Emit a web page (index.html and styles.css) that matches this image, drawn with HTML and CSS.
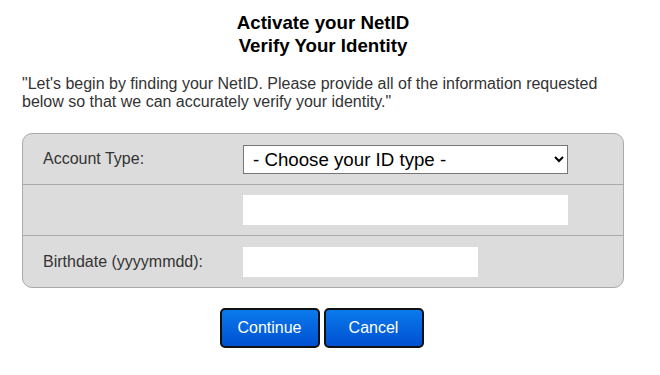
FILE: index.html
```html
<!DOCTYPE html>
<html lang="en">

<head>
    <meta charset="UTF-8">
    <meta name="viewport" content="width=device-width, initial-scale=1.0">
    <title>Activate your NetID</title>
    <link rel="stylesheet" href="styles.css">
</head>

<body>
    <div class="page">
        <h3 class="title">Activate your NetID<br>Verify Your Identity</h3>

        <p class="intro">"Let's begin by finding your NetID. Please provide all of the information requested below so that we can accurately verify your identity."</p>

        <form id="verifyForm">
            <div class="form-box">
                <div class="form-row">
                    <label for="idType">Account Type:</label>
                    <select id="idType">
                        <option>- Choose your ID type -</option>
                        <option>Student ID</option>
                        <option>Employee ID</option>
                    </select>
                </div>
                <div class="form-row">
                    <label for="idNumber"></label>
                    <input type="text" id="idNumber" class="wide">
                </div>
                <div class="form-row">
                    <label for="birthdate">Birthdate (yyyymmdd):</label>
                    <input type="text" id="birthdate" class="short">
                </div>
            </div>

            <div class="actions">
                <button type="submit" class="btn">Continue</button>
                <button type="button" class="btn">Cancel</button>
            </div>
        </form>
    </div>
</body>

</html>
```

FILE: styles.css
```css
body {
    margin: 0;
    font-family: "Liberation Sans", Arial, sans-serif;
    font-size: 16px;
    color: #333;
    background-color: #fff;
}

.page {
    width: 602px;
    margin-left: 22px;
}

.title {
    margin: 12px 0 0;
    font-size: 18.72px;
    line-height: 22.5px;
    font-weight: bold;
    color: #000;
    text-align: center;
}

.intro {
    margin: 18px 0 22px;
    line-height: 18px;
}

.form-box {
    background-color: #dcdcdc;
    border: 1px solid #aaa;
    border-radius: 10px;
}

.form-row {
    display: flex;
    align-items: center;
    height: 50px;
    border-bottom: 1px solid #aaa;
}

.form-row:last-child {
    height: 51px;
    border-bottom: none;
}

.form-row label {
    width: 200px;
    padding-left: 20px;
    flex-shrink: 0;
}

select {
    width: 325px;
    height: 29px;
    margin: 0;
    padding: 0 5px;
    font-family: "Liberation Sans", Arial, sans-serif;
    font-size: 18.7px;
    color: #000;
    background-color: #fff;
    border: 1px solid #767676;
    border-radius: 0;
}

input[type="text"] {
    height: 30px;
    margin: 0;
    padding: 0 4px;
    box-sizing: border-box;
    border: none;
    background-color: #fff;
    font-size: 16px;
}

.wide {
    width: 325px;
}

.short {
    width: 235px;
}

.actions {
    display: flex;
    justify-content: center;
    gap: 4px;
    margin-top: 20px;
    padding-right: 3px;
}

.btn {
    width: 100px;
    height: 40px;
    font-family: "Liberation Sans", Arial, sans-serif;
    font-size: 16px;
    color: #fff;
    background: linear-gradient(#0a7aec, #0050d2);
    border: 2px solid #111;
    border-radius: 5px;
    cursor: pointer;
}
```
